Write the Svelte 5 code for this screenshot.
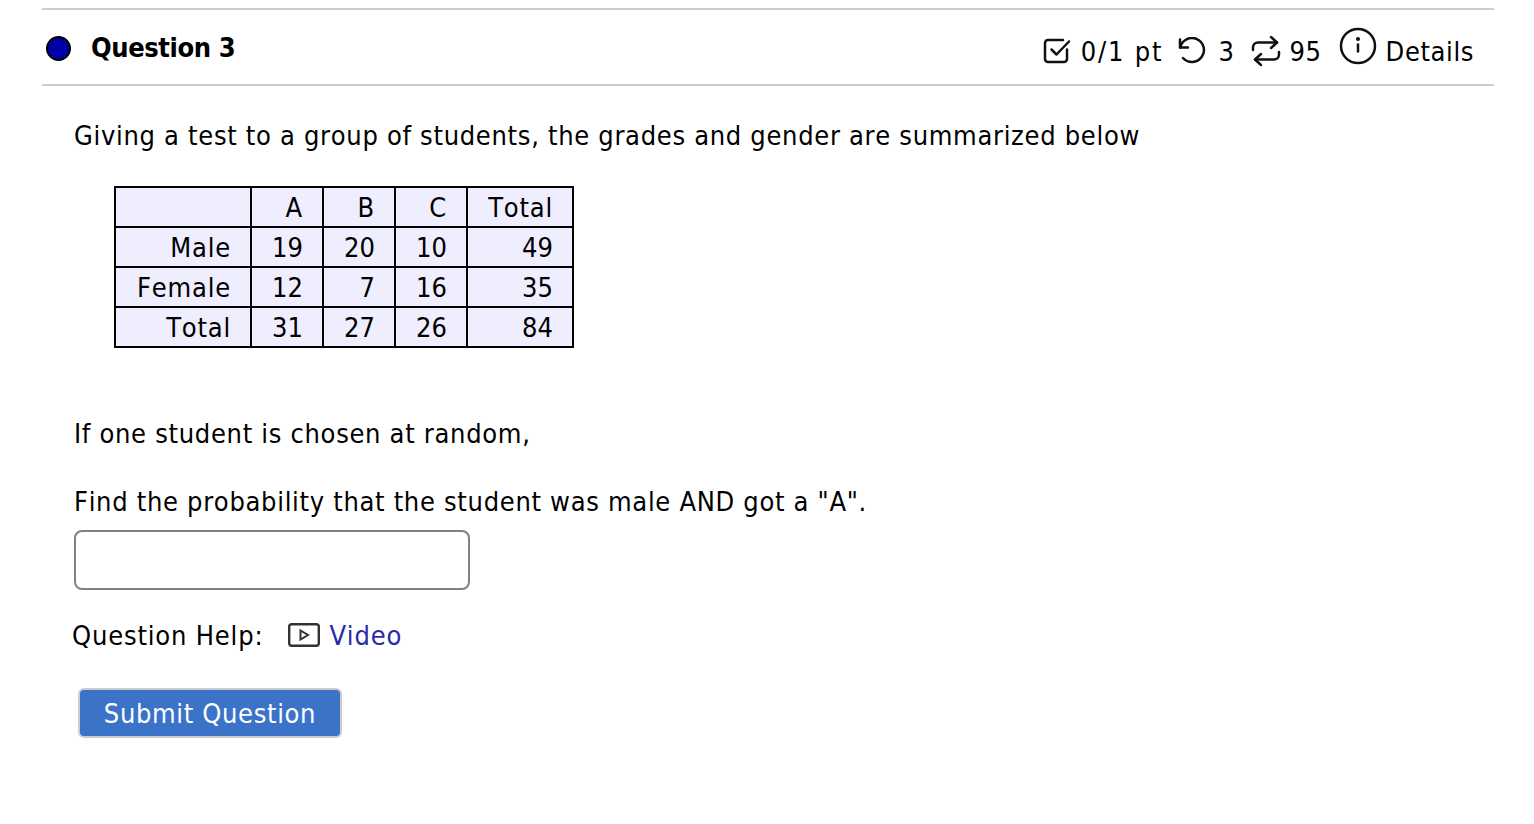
<script>
  const rows = [
    ['', 'A', 'B', 'C', 'Total'],
    ['Male', 19, 20, 10, 49],
    ['Female', 12, 7, 16, 35],
    ['Total', 31, 27, 26, 84]
  ];
</script>

<div class="page">
  <div class="question">
    <header class="head">
      <div class="title">
        <span class="dot"></span>
        <h2>Question 3</h2>
      </div>
      <div class="meta">
        <svg class="ico check" viewBox="0 0 28 28" width="28" height="28">
          <path d="M24 12.500V22a3 3 0 0 1-3 3H5a3 3 0 0 1-3-3V6a3 3 0 0 1 3-3h15" />
          <path d="M8.500 12.500l5 5L26 4.500" />
        </svg>
        <span class="t1">0/1 pt</span>
        <svg class="ico retry" viewBox="0 0 30 28" width="30" height="28">
          <path d="M3 2.500v8h8" />
          <path d="M3.200 10.500A12 12 0 1 1 6 21" />
        </svg>
        <span class="t2">3</span>
        <svg class="ico repeat" viewBox="0 0 30 32" width="30" height="32">
          <path d="M20 2l6 5.500-6 5.500" />
          <path d="M26 7.500H7a5 5 0 0 0-5 5v2.500" />
          <path d="M10 30l-6-5.500 6-5.500" />
          <path d="M4 24.500h19a5 5 0 0 0 5-5V17" />
        </svg>
        <span class="t3">95</span>
        <svg class="ico info" viewBox="0 0 38 38" width="38" height="38">
          <circle cx="19" cy="19" r="17" />
          <path class="i" d="M19 17.500v7" />
          <circle class="idot" cx="19" cy="12" r="2" />
        </svg>
        <span class="t4">Details</span>
      </div>
    </header>

    <div class="body">
      <p class="intro">Giving a test to a group of students, the grades and gender are summarized below</p>

      <table>
        <tbody>
          {#each rows as row}
            <tr>
              {#each row as cell}
                <td>{cell}</td>
              {/each}
            </tr>
          {/each}
        </tbody>
      </table>

      <p class="chosen">If one student is chosen at random,</p>
      <p class="find">Find the probability that the student was male AND got a "A".</p>

      <input type="text" class="answer" />

      <div class="help">
        <span class="help-label">Question Help:</span>
        <svg class="video-ico" viewBox="0 0 32 24" width="32" height="24">
          <rect x="1.200" y="1.200" width="29.600" height="21.600" rx="2.500" />
          <path d="M12.500 7.500v9l7.500-4.500z" />
        </svg>
        <a href="#video">Video</a>
      </div>

      <button type="button">Submit Question</button>
    </div>
  </div>
</div>

<style>
  :global(body) {
    background: #fff;
    color: #000;
    font-family: "DejaVu Sans Condensed", "DejaVu Sans", sans-serif;
    font-stretch: condensed;
    font-kerning: none;
  }
  .page {
    padding: 8px 40px 0 42px;
  }
  .question {
    border-top: 2px solid #ccc;
  }
  .head {
    display: flex;
    justify-content: space-between;
    height: 74px;
    border-bottom: 2px solid #ccc;
    padding-right: 20px;
  }
  .title {
    display: flex;
    align-items: center;
    height: 76px;
    padding-left: 4px;
  }
  .dot {
    width: 21px;
    height: 21px;
    border-radius: 50%;
    background: #0000a8;
    border: 2px solid #000;
  }
  h2 {
    margin: 0 0 2px 20px;
    font-size: 27px;
    font-weight: 700;
    line-height: 1;
    letter-spacing: -.4px;
  }
  .meta {
    display: flex;
    align-items: center;
    font-size: 27px;
    padding-top: 8px;
    letter-spacing: .6px;
  }
  .ico {
    fill: none;
    stroke: #111;
    stroke-width: 2.500;
    stroke-linecap: round;
    stroke-linejoin: round;
  }
  .info {
    margin-bottom: 10px;
  }
  .idot {
    fill: #111;
    stroke: none;
  }
  .t1 { margin: 0 14px 0 10px; letter-spacing: 1.8px; }
  .t2 { margin: 0 17px 0 11px; }
  .t3 { margin: 0 17px 0 8px; }
  .t4 { margin-left: 9px; }
  .body {
    padding: 0 0 0 32px;
    font-size: 27px;
    letter-spacing: .69px;
  }
  p {
    margin: 0;
  }
  .intro {
    line-height: 38px;
    padding-top: 31px;
  }
  table {
    border-collapse: collapse;
    margin: 31px 0 0 40px;
    background: #eeeeff;
  }
  td {
    border: 2px solid #000;
    height: 38px;
    padding: 0 19px 0 20px;
    text-align: right;
    line-height: 1;
    letter-spacing: 0;
  }
  td:first-child {
    width: 95px;
    letter-spacing: .8px;
  }
  tr:first-child td {
    letter-spacing: .8px;
  }
  td:nth-child(2), td:nth-child(3), td:nth-child(4) {
    width: 31px;
  }
  td:last-child {
    width: 65px;
  }
  .chosen {
    margin-top: 67px;
    line-height: 38px;
  }
  .find {
    margin-top: 30px;
    line-height: 38px;
  }
  .answer {
    display: block;
    box-sizing: border-box;
    width: 396px;
    height: 60px;
    margin-top: 9px;
    border: 2px solid #808080;
    border-radius: 8px;
    background: #fff;
  }
  .help {
    display: flex;
    align-items: center;
    margin: 26px 0 0 -2px;
    height: 38px;
    letter-spacing: .82px;
  }
  .video-ico {
    margin-left: 25px;
    fill: none;
    stroke: #333;
    stroke-width: 2.400;
  }
  .video-ico path {
    stroke-width: 2;
  }
  a {
    margin-left: 9px;
    color: #2a2aa8;
    text-decoration: none;
  }
  button {
    display: block;
    box-sizing: border-box;
    width: 264px;
    height: 50px;
    margin: 34px 0 0 4px;
    padding: 0;
    border: 2px solid #ccc;
    border-radius: 6px;
    background: #3b73c9;
    color: #fff;
    font: inherit;
    letter-spacing: .65px;
  }
</style>
